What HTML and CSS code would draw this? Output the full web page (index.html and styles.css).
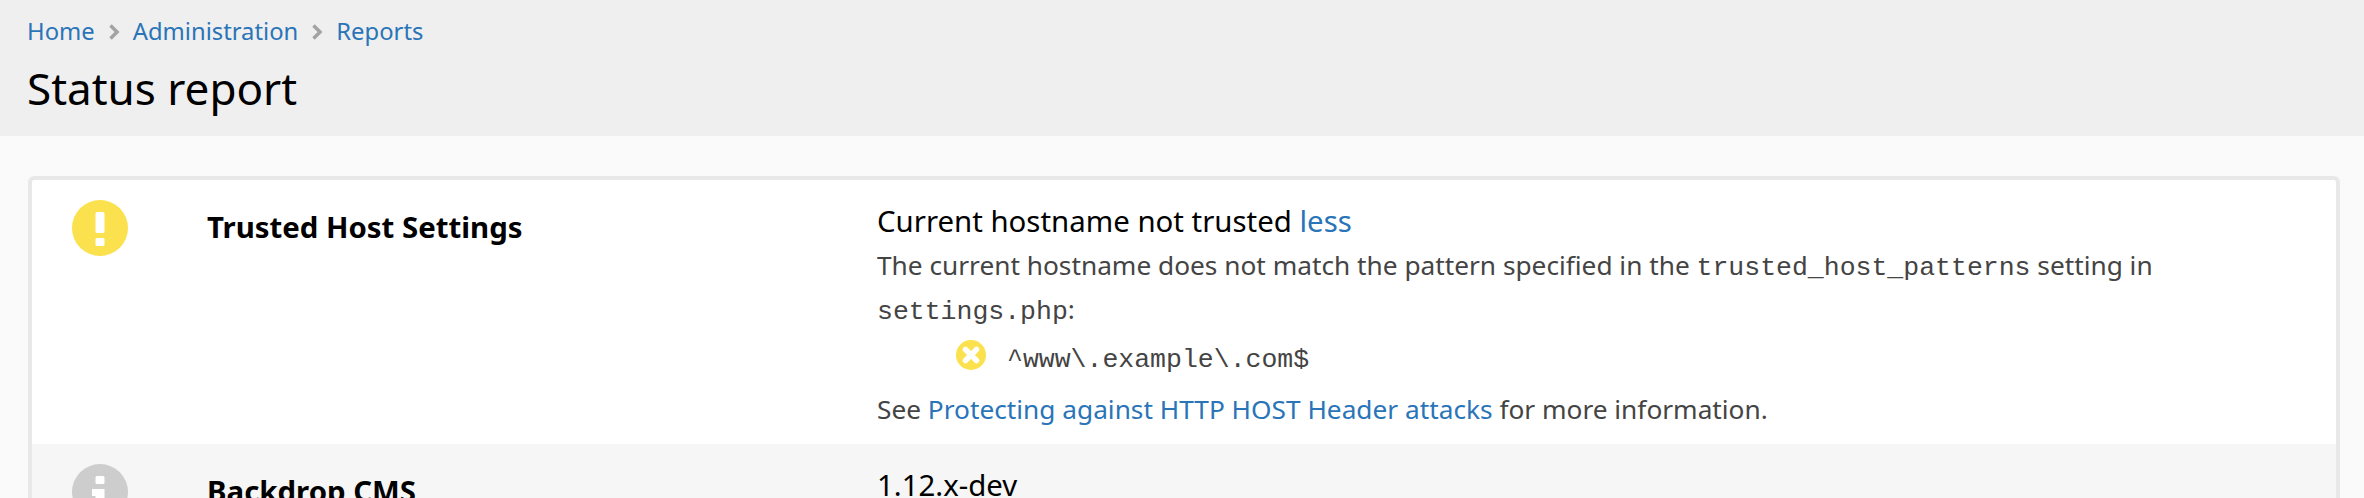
FILE: index.html
```html
<!DOCTYPE html>
<html lang="en">
<head>
<meta charset="utf-8">
<title>Status report</title>
<link rel="stylesheet" href="styles.css">
</head>
<body>
<header class="page-header">
  <nav class="breadcrumb">
    <a href="#">Home</a>
    <svg class="crumb-sep" viewBox="0 0 12 16"><path d="M2.500 1.500 9 8 2.500 14.500" fill="none" stroke="#a3a3a3" stroke-width="3.500"/></svg>
    <a href="#">Administration</a>
    <svg class="crumb-sep" viewBox="0 0 12 16"><path d="M2.500 1.500 9 8 2.500 14.500" fill="none" stroke="#a3a3a3" stroke-width="3.500"/></svg>
    <a href="#">Reports</a>
  </nav>
  <h1 class="page-title">Status report</h1>
</header>
<main class="content">
  <section class="report">
    <div class="row row-warning">
      <div class="icon-cell">
        <svg class="status-icon" viewBox="0 0 56 56"><circle cx="28" cy="28" r="28" fill="#fbe14d"/><rect x="23.500" y="12" width="9" height="21" rx="1.500" fill="#fff"/><rect x="23.500" y="38" width="9" height="8" rx="1.500" fill="#fff"/></svg>
      </div>
      <div class="title-cell">Trusted Host Settings</div>
      <div class="value-cell">
        <div class="value">Current hostname not trusted <a href="#">less</a></div>
        <div class="description">
          <p>The current hostname does not match the pattern specified in the <code>trusted_host_patterns</code> setting in <code>settings.php</code>:</p>
          <div class="pattern">
            <svg class="mini-icon" viewBox="0 0 30 30"><circle cx="15" cy="15" r="15" fill="#fbe14d"/><path d="M9.500 9.500l11 11M20.500 9.500l-11 11" stroke="#fff" stroke-width="5.500" stroke-linecap="round"/></svg>
            <code class="pattern-code">^www\.example\.com$</code>
          </div>
          <p>See <a href="#">Protecting against HTTP HOST Header attacks</a> for more information.</p>
        </div>
      </div>
    </div>
    <div class="row row-info">
      <div class="icon-cell">
        <svg class="status-icon" viewBox="0 0 56 56"><circle cx="28" cy="28" r="28" fill="#cdcdcd"/><rect x="23.500" y="12" width="9" height="8" rx="1.500" fill="#fff"/><path d="M20 25h12.500v19h-9v-12h-3.500z" fill="#fff"/></svg>
      </div>
      <div class="title-cell">Backdrop CMS</div>
      <div class="value-cell">
        <div class="value">1.12.x-dev</div>
      </div>
    </div>
  </section>
</main>
</body>
</html>
```
FILE: styles.css
```css
html, body {
  margin: 0;
  height: 100%;
  overflow: hidden;
}
body {
  background: #fafafa;
  color: #000;
  font-family: "Noto Sans", "Open Sans", sans-serif;
  font-size: 24px;
}
a {
  color: #2a74b8;
  text-decoration: none;
}
p {
  margin: 0;
}
.page-header {
  background: #efefef;
  height: 136px;
  box-sizing: border-box;
  padding: 15px 27px 0;
}
.breadcrumb {
  display: flex;
  align-items: center;
  gap: 13px;
  font-size: 23.800px;
  line-height: 33px;
}
.crumb-sep {
  width: 12px;
  height: 16px;
}
.page-title {
  margin: 12px 0 0;
  font-size: 44px;
  font-weight: 400;
  line-height: 56px;
}
.content {
  padding: 40px 24px 0 28px;
}
.report {
  border: 4px solid #e8e8e8;
  border-bottom: 0;
  border-radius: 6px 6px 0 0;
  background: #fff;
}
.row {
  display: grid;
  grid-template-columns: 175px 670px 1fr;
  padding: 20px 0;
}
.row-warning {
  height: 264px;
  box-sizing: border-box;
}
.row-info {
  background: #f6f6f6;
}
.icon-cell {
  padding-left: 40px;
}
.status-icon {
  display: block;
  width: 56px;
  height: 56px;
}
.title-cell {
  font-weight: 700;
  font-size: 29.400px;
  line-height: 40px;
  padding-top: 7px;
}
.value {
  font-size: 29.400px;
  line-height: 41px;
  padding-top: 1px;
}
.description {
  color: #444;
  font-size: 26.250px;
  line-height: 41px;
  margin-top: 3px;
}
code {
  font-family: "Liberation Mono", monospace;
  font-size: 26.500px;
}
.pattern {
  display: flex;
  align-items: flex-start;
  height: 56px;
  padding-left: 79px;
  gap: 21px;
}
.pattern-code {
  margin-top: 7px;
}
.mini-icon {
  width: 30px;
  height: 30px;
  margin-top: 7px;
}
```
